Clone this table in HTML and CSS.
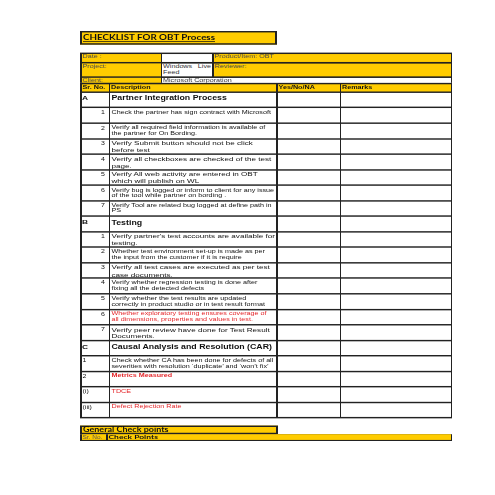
FILE: index.html
```html
<!DOCTYPE html>
<html>
<head>
<meta charset="utf-8">
<title>Checklist for OBT Process</title>
<link rel="stylesheet" href="styles.css">
</head>
<body>
<div class="sheet">
  <div class="page">
    <div class="title"><span>CHECKLIST FOR OBT Process</span></div>

    <div class="info">
      <div class="c lab">Date :</div>
      <div class="c val"></div>
      <div class="c lab">Product/Item: OBT</div>
      <div class="c lab">Project:</div>
      <div class="c val just">Windows Live Feed</div>
      <div class="c lab">Reviewer:</div>
      <div class="c lab">Client:</div>
      <div class="c val span2">Microsoft Corporation</div>
    </div>

    <div class="grid">
      <div class="h">Sr. No.</div><div class="h">Description</div><div class="h">Yes/No/NA</div><div class="h">Remarks</div>

      <div class="letter">A</div><div class="sec">Partner Integration Process</div><div></div><div></div>
      <div class="n">1</div><div class="t">Check the partner has sign contract with Microsoft</div><div></div><div></div>
      <div class="n">2</div><div class="t">Verify all required field information is available of the partner for On Bording.</div><div></div><div></div>
      <div class="n">3</div><div class="t big">Verify Submit button should not be click before test</div><div></div><div></div>
      <div class="n">4</div><div class="t big">Verify all checkboxes are checked of the test page.</div><div></div><div></div>
      <div class="n">5</div><div class="t big">Verify All web activity are entered in OBT which will publish on WL</div><div></div><div></div>
      <div class="n">6</div><div class="t">Verify bug is logged or inform to client for any issue of the tool while partner on bording .</div><div></div><div></div>
      <div class="n">7</div><div class="t">Verify Tool are related bug logged at define path in PS</div><div></div><div></div>

      <div class="letter">B</div><div class="sec">Testing</div><div></div><div></div>
      <div class="n">1</div><div class="t big">Verify partner's test accounts are available for testing.</div><div></div><div></div>
      <div class="n">2</div><div class="t">Whether test environment set-up is made as per the input from the customer if it is require</div><div></div><div></div>
      <div class="n">3</div><div class="t big">Verify all test cases are executed as per test case documents.</div><div></div><div></div>
      <div class="n">4</div><div class="t">Verify whether regression testing is done after fixing all the detected defects</div><div></div><div></div>
      <div class="n">5</div><div class="t">Verify whether the test results are updated correctly in product studio or in test result format</div><div></div><div></div>
      <div class="n">6</div><div class="t red">Whether exploratory testing ensures coverage of all dimensions, properties and values in test.</div><div></div><div></div>
      <div class="n">7</div><div class="t big">Verify peer review have done for Test Result Documents.</div><div></div><div></div>

      <div class="letter">C</div><div class="sec">Causal Analysis and Resolution (CAR)</div><div></div><div></div>
      <div class="nl">1</div><div class="t">Check whether CA has been done for defects of all severities with resolution ‘duplicate’ and ‘won’t fix’</div><div></div><div></div>
      <div class="nl">2</div><div class="t red bold">Metrics Measured</div><div></div><div></div>
      <div class="nl">(i)</div><div class="t red">TDCE</div><div></div><div></div>
      <div class="nl">(iii)</div><div class="t red">Defect Rejection Rate</div><div></div><div></div>
    </div>

    <div class="gen">General Check points</div>
    <div class="cp">
      <div class="cp-no">Sr. No.</div>
      <div class="cp-txt">Check Points</div>
    </div>
  </div>
</div>
</body>
</html>
```

FILE: styles.css
```css
html, body {
  margin: 0;
  padding: 0;
  overflow: hidden;
  background: #fff;
}

body {
  font-family: "Liberation Sans", Arial, sans-serif;
  color: #111;
}

.sheet {
  padding: 31px 0 0 80px;
  height: 464px;
}

/* the whole sheet is rendered vertically compressed, as in the source */
.page {
  width: 372px;
  transform: scaleY(0.72);
  transform-origin: 0 0;
}

.title {
  box-sizing: border-box;
  width: 197px;
  height: 18.6px;
  border: 2px solid #222;
  background: #ffcc00;
  font-family: Lato, "Liberation Sans", sans-serif;
  font-weight: 700;
  font-size: 9.8px;
  line-height: 14.6px;
  padding-left: 1px;
  color: #111;
}

.title span {
  text-decoration: underline;
}

/* header info block */
.info {
  margin-top: 11.1px;
  display: grid;
  grid-template-columns: 79px 50px 237px;
  grid-template-rows: 11.6px 17.5px 7.7px;
  gap: 2px 1.5px;
  padding: 2px 1.5px 0;
  background: #222;
}

.c {
  overflow: hidden;
  font-size: 7.2px;
  line-height: 1.15;
  padding: 0.5px 1px 0;
}

.lab {
  background: #ffcc00;
  color: #4a4a4a;
}

.val {
  background: #fff;
  color: #333;
}

.just {
  text-align: justify;
  overflow: visible;
}

.span2 {
  grid-column: span 2;
  line-height: 7px;
  padding-top: 0;
}

.info .lab:nth-child(7) {
  line-height: 7px;
  padding-top: 0;
}

/* checklist table */
.grid {
  display: grid;
  grid-template-columns: 27px 166px 62px 109.5px;
  grid-template-rows: 9.4px;
  grid-auto-rows: 19.55px;
  gap: 2px 1.5px;
  padding: 2px 1.5px;
  background: #222;
}

.grid > div {
  background: #fff;
  overflow: hidden;
}

.grid > .h {
  background: #ffcc00;
  font-weight: 700;
  font-size: 7.2px;
  line-height: 9.4px;
  padding-left: 1px;
}

.letter {
  font-weight: 700;
  font-size: 8.4px;
  padding: 2px 0 0 0.5px;
}

.sec {
  font-weight: 700;
  font-size: 8.8px;
  line-height: 1.15;
  padding: 2.5px 1px 0 1.5px;
}

.n {
  text-align: right;
  font-size: 7px;
  padding: 2px 3.5px 0 0;
}

.nl {
  font-size: 7px;
  padding: 2px 0 0 1px;
}

.t {
  font-size: 7.2px;
  line-height: 1.13;
  padding: 1.5px 1px 0 1.5px;
}

.t.big {
  font-size: 8.1px;
}

.red {
  color: #e4262a;
}

.bold {
  font-weight: 700;
}

/* general check points */
.gen {
  box-sizing: border-box;
  margin-top: 9.7px;
  width: 198px;
  height: 11.5px;
  border: 2px solid #222;
  background: #ffcc00;
  font-family: Lato, "Liberation Sans", sans-serif;
  font-weight: 700;
  font-size: 9px;
  line-height: 7.5px;
  padding-left: 1px;
  color: #111;
}

.cp {
  display: grid;
  grid-template-columns: 24.5px 1fr;
  column-gap: 1.5px;
  padding: 0 1.5px 2px;
  height: 10.4px;
  box-sizing: border-box;
  background: #222;
}

.cp > div {
  background: #ffcc00;
  overflow: hidden;
}

.cp-no {
  font-size: 6.5px;
  line-height: 8.4px;
  color: #555;
  padding-left: 1px;
}

.cp-txt {
  font-family: Lato, "Liberation Sans", sans-serif;
  font-weight: 700;
  font-size: 8.5px;
  line-height: 8.4px;
  padding-left: 1px;
}
```
